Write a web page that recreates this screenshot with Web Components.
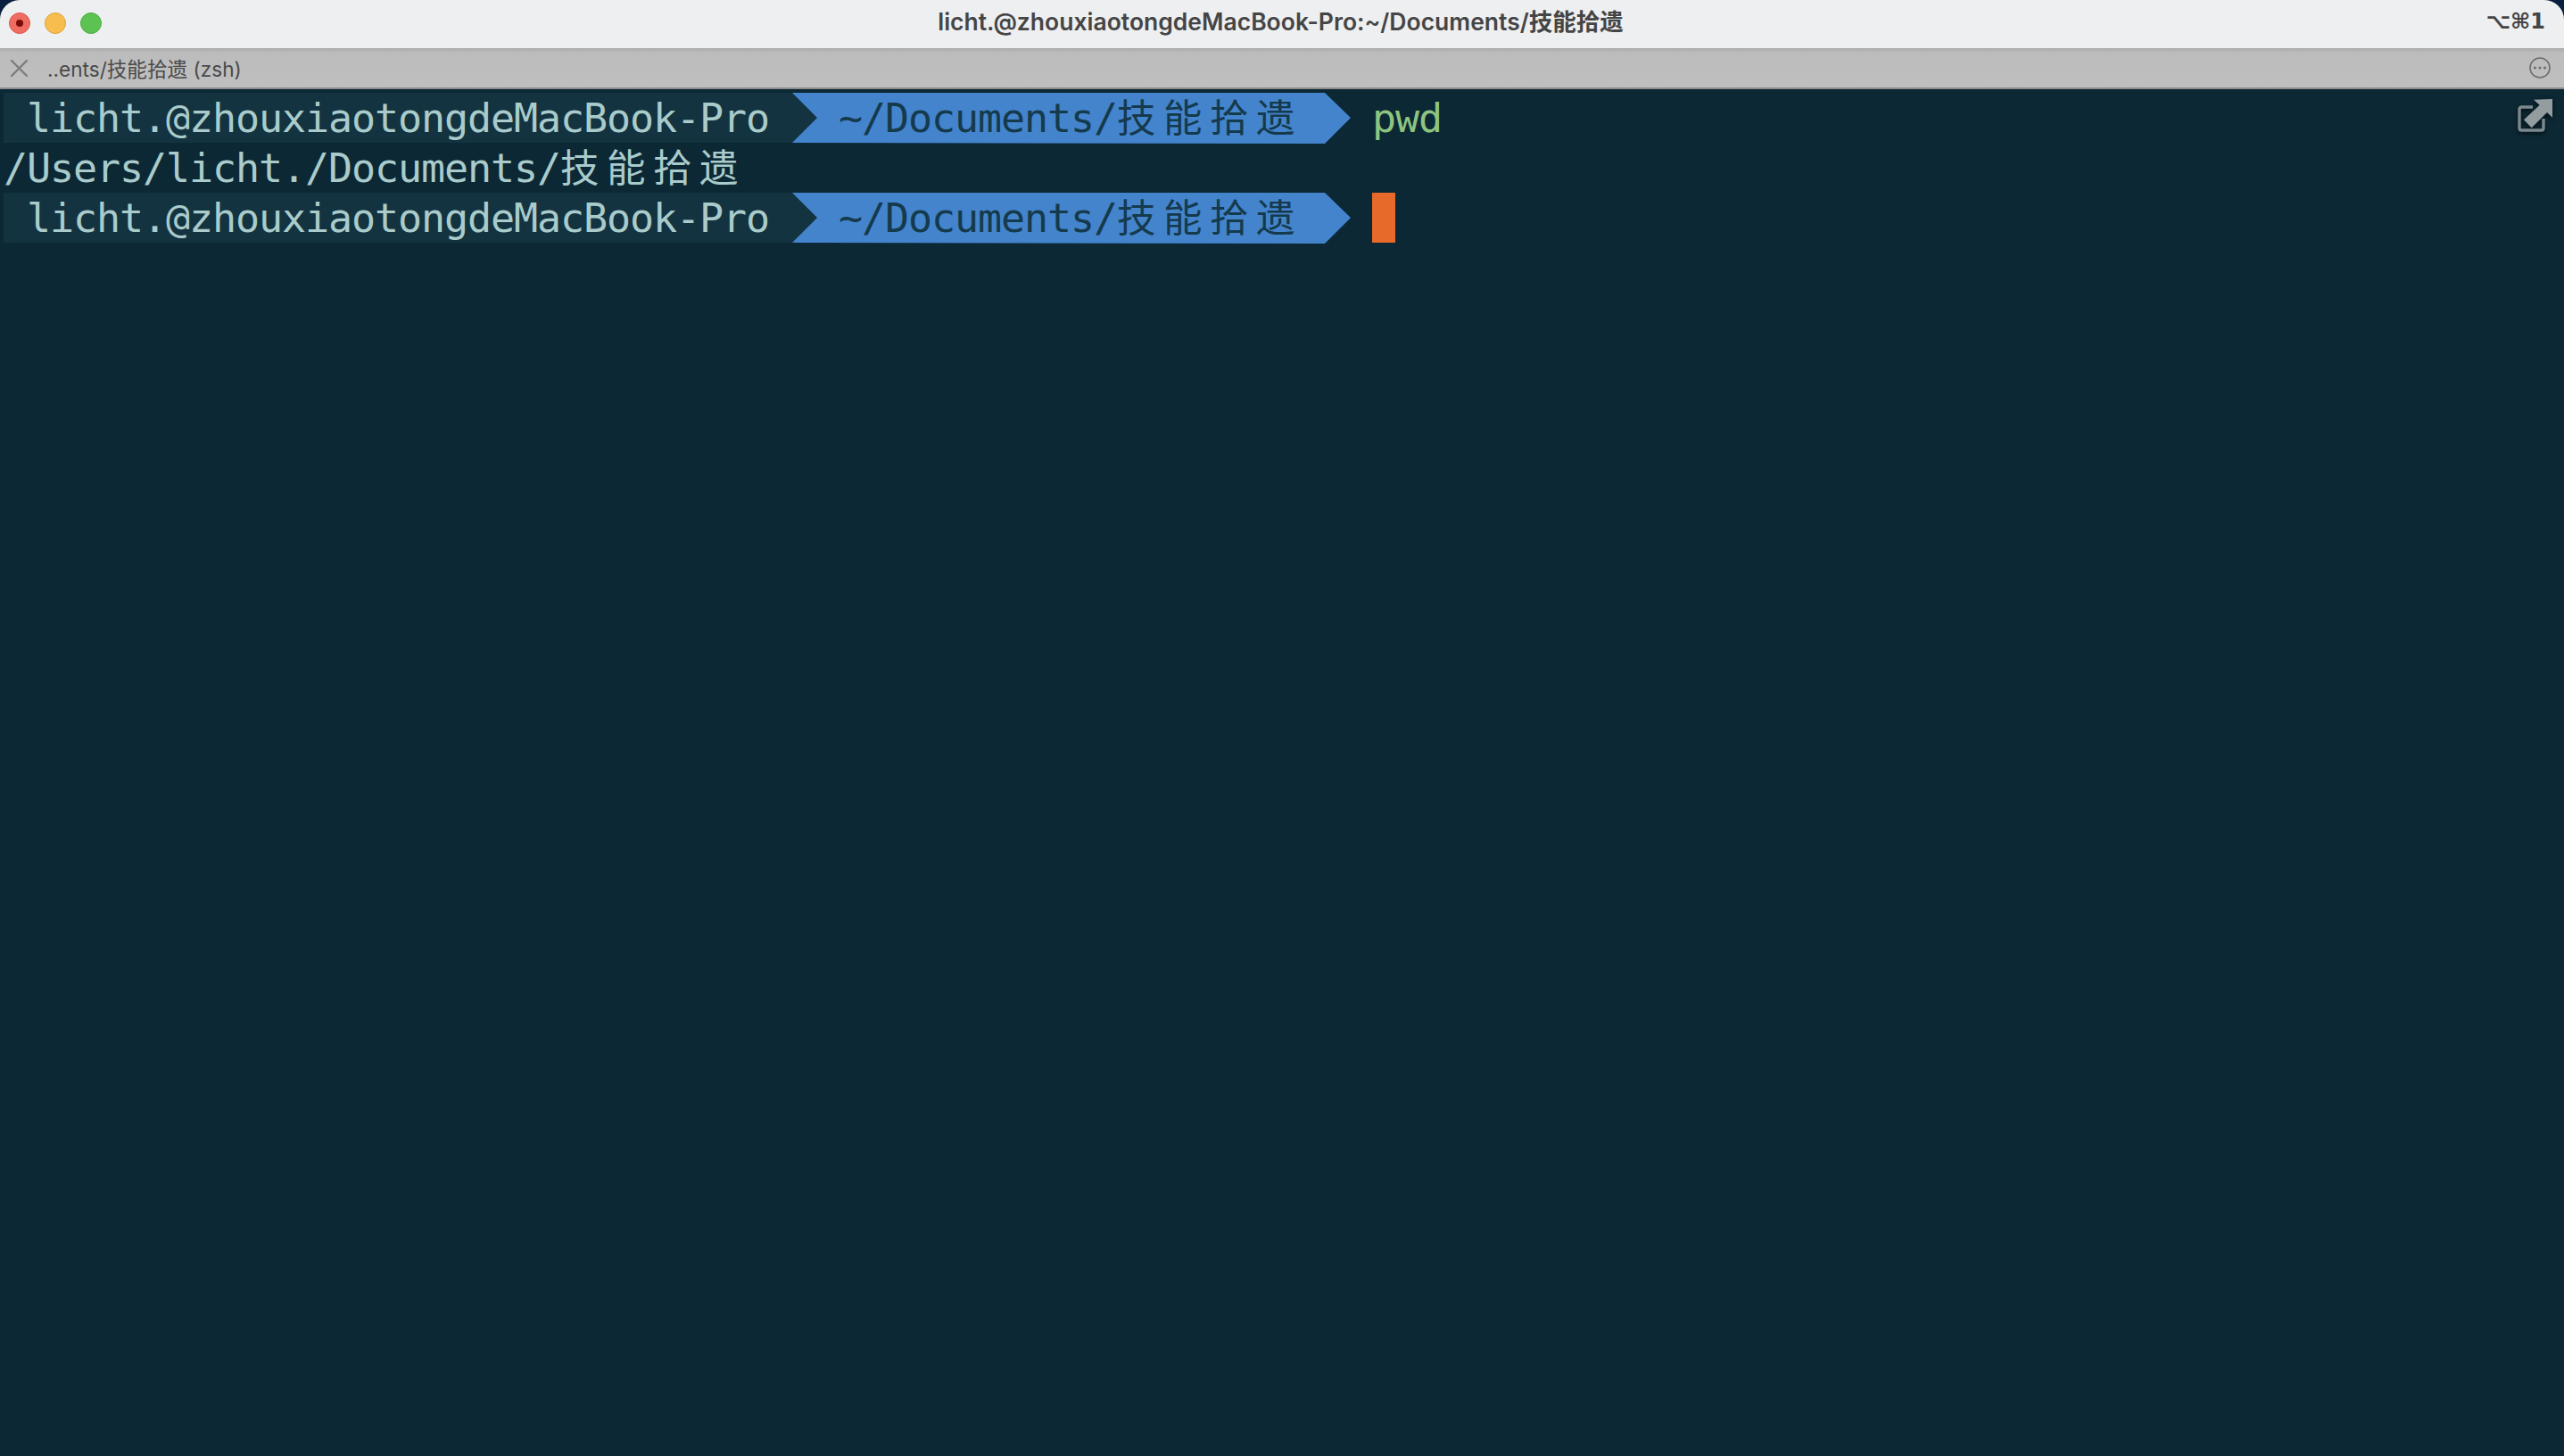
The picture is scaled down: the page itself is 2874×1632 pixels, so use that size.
<!DOCTYPE html>
<html lang="zh">
<head>
<meta charset="utf-8">
<title>iTerm</title>
<style>
  html, body { margin: 0; height: 100%; background: #0a1f3f; overflow: hidden; }
</style>
</head>
<body>
<term-window>
  <title-bar title-text="licht.@zhouxiaotongdeMacBook-Pro:~/Documents/" title-cjk="技能拾遗" shortcut="⌥⌘1"></title-bar>
  <tab-bar><span>..ents/技能拾遗 (zsh)</span></tab-bar>
  <term-view>
    <prompt-line><span class="cmd">pwd</span></prompt-line>
    <output-line>/Users/licht./Documents/<cjk-text>技能拾遗</cjk-text></output-line>
    <prompt-line cursor></prompt-line>
  </term-view>
</term-window>

<script>
class TermWindow extends HTMLElement {
  constructor() {
    super();
    this.attachShadow({ mode: 'open' });
    this.shadowRoot.innerHTML = `
      <style>
        :host { display: flex; flex-direction: column; width: 2874px; height: 1632px; overflow: hidden; border-radius: 22px 22px 0 0; background: #0c2834; }
      </style>
      <slot></slot>`;
  }
}

class TitleBar extends HTMLElement {
  constructor() {
    super();
    this.attachShadow({ mode: 'open' });
    this.shadowRoot.innerHTML = `
      <style>
        :host { display: grid; grid-template-columns: 1fr auto 1fr; align-items: center; height: 54px; background: #eeeff1; color: #454545; box-sizing: border-box; padding: 0 21px 2px 10px; }
        .lights { display: flex; gap: 16px; }
        .lights i { display: block; width: 24px; height: 24px; box-sizing: border-box; border-radius: 50%; border: 1px solid; position: relative; }
        .red { background: #ef6c60; border-color: #d9574c !important; }
        .red::after { content: ""; position: absolute; left: 7px; top: 7px; width: 8px; height: 8px; border-radius: 50%; background: #780d08; }
        .yellow { background: #f7be4f; border-color: #dfa03a !important; }
        .green { background: #5cc353; border-color: #4cab43 !important; }
        .title { font: 600 26.5px/30px "Inter", "Noto Sans CJK SC", sans-serif; white-space: pre; transform: translate(4px, -2px); }
        .keys { justify-self: end; font: 700 24px/30px "DejaVu Sans", sans-serif; transform: translateY(-2px); }
      </style>
      <div class="lights"><i class="red"></i><i class="yellow"></i><i class="green"></i></div>
      <div class="title"></div>
      <div class="keys"></div>`;
  }
  connectedCallback() {
    this.shadowRoot.querySelector('.title').textContent = this.getAttribute('title-text') + this.getAttribute('title-cjk');
    this.shadowRoot.querySelector('.keys').textContent = this.getAttribute('shortcut');
  }
}

class TabBar extends HTMLElement {
  constructor() {
    super();
    this.attachShadow({ mode: 'open' });
    this.shadowRoot.innerHTML = `
      <style>
        :host { display: flex; align-items: center; height: 46px; box-sizing: border-box; background: linear-gradient(#a9a9a9, #bcbcbc 5px, #bfbfbf); border-bottom: 2px solid #8d8d8d; padding: 0 14px 0 11px; color: #4a4a4a; font: 400 22.6px "Inter", "Noto Sans CJK SC", sans-serif; }
        .close { width: 21px; height: 21px; margin-right: 21px; }
        .more { width: 26px; height: 26px; margin-left: auto; }
        ::slotted(span) { white-space: pre; }
      </style>
      <svg class="close" viewBox="0 0 21 21"><path d="M2 2 L19 19 M19 2 L2 19" stroke="#7c7c7c" stroke-width="2.4" stroke-linecap="round" fill="none"/></svg>
      <slot></slot>
      <svg class="more" viewBox="0 0 26 26"><circle cx="13" cy="13" r="11" fill="none" stroke="#6e6e6e" stroke-width="1.6"/><circle cx="7.5" cy="13" r="1.6" fill="#6e6e6e"/><circle cx="13" cy="13" r="1.6" fill="#6e6e6e"/><circle cx="18.5" cy="13" r="1.6" fill="#6e6e6e"/></svg>`;
  }
}

class TermView extends HTMLElement {
  constructor() {
    super();
    this.attachShadow({ mode: 'open' });
    this.shadowRoot.innerHTML = `
      <style>
        :host { display: flex; flex-direction: column; flex: 1; position: relative; padding: 4px 0 0 4px; background: #0c2834; color: #a9cbcb; font: 45px/58px "DejaVu Sans Mono", "Noto Sans CJK SC", monospace; letter-spacing: -1.09px; }
        .badge { position: absolute; right: 7px; top: 6px; width: 52px; height: 52px; filter: drop-shadow(0 2px 2px rgba(0,0,0,.6)); }
      </style>
      <slot></slot>
      <svg class="badge" viewBox="0 0 52 52">
        <path d="M24 14 H11.5 Q9 14 9 16.5 V37.5 Q9 40 11.5 40 H33.500 Q36 40 36 37.500 V27" fill="none" stroke="#7c898e" stroke-width="3.4"/>
        <path d="M25 5.700 L46 5 V25.700 L40 20 L22.700 37.300 L14 28.300 L31.700 11.700 Z" fill="#939c9f" stroke="#0c2834" stroke-width="1.500" paint-order="stroke"/>
      </svg>`;
  }
}

class CjkText extends HTMLElement {
  constructor() {
    super();
    this.attachShadow({ mode: 'open' });
    this.shadowRoot.innerHTML = `
      <style>
        :host { display: inline-flex; }
        span { display: block; width: 52px; font-size: 43.5px; letter-spacing: 0; }
      </style>`;
  }
  connectedCallback() {
    // every wide character takes exactly two terminal cells
    for (const ch of this.textContent) {
      const s = document.createElement('span');
      s.textContent = ch;
      this.shadowRoot.appendChild(s);
    }
  }
}

class OutputLine extends HTMLElement {
  constructor() {
    super();
    this.attachShadow({ mode: 'open' });
    this.shadowRoot.innerHTML = `
      <style>
        :host { display: flex; height: 56px; white-space: pre; }
      </style>
      <slot></slot>`;
  }
}

class PromptLine extends HTMLElement {
  constructor() {
    super();
    this.attachShadow({ mode: 'open' });
    this.shadowRoot.innerHTML = `
      <style>
        :host { display: flex; height: 56px; white-space: pre; }
        .user { width: 912px; height: 56px; padding-left: 26px; box-sizing: border-box; background: #143340; flex: none; }
        .path { display: flex; width: 626px; height: 57px; margin-left: -28px; padding-left: 52px; box-sizing: border-box; flex: none; color: #153a4c; background: #4384cd;
                clip-path: polygon(0 0, 597px 0, 626px 28px, 597px 57px, 0 56px, 28px 28px); }
        .rest { margin-left: 24px; display: flex; color: #8fc480; }
        .cursor { display: none; width: 26px; height: 56px; background: #e86a2a; }
        :host([cursor]) .cursor { display: block; }
        ::slotted(.cmd) { color: #8fc480; }
      </style>
      <div class="user"></div>
      <div class="path">~/Documents/<cjk-text>技能拾遗</cjk-text></div>
      <div class="rest"><slot></slot><div class="cursor"></div></div>`;
    this.shadowRoot.querySelector('.user').textContent = 'licht.@zhouxiaotongdeMacBook-Pro';
  }
}

customElements.define('term-window', TermWindow);
customElements.define('title-bar', TitleBar);
customElements.define('tab-bar', TabBar);
customElements.define('term-view', TermView);
customElements.define('cjk-text', CjkText);
customElements.define('output-line', OutputLine);
customElements.define('prompt-line', PromptLine);
</script>
</body>
</html>
